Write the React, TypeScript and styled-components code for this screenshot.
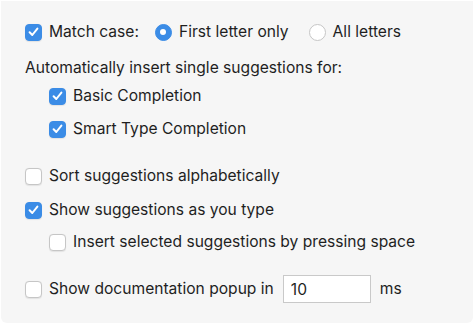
import React, { useState } from "react";
import styled, { createGlobalStyle } from "styled-components";

const GlobalStyle = createGlobalStyle`
  html, body {
    margin: 0;
    padding: 0;
    background: #ffffff;
  }
  body {
    font-family: Inter, "Open Sans", "Liberation Sans", sans-serif;
  }
`;

const Panel = styled.div`
  box-sizing: border-box;
  width: 472px;
  height: 322px;
  margin: 1px 1px 0 1px;
  background: #f6f6f6;
  border-radius: 0 0 6px 6px;
  padding: 21px 24px 0 24px;
  color: #1f1f1f;
  font-size: 15.6px;
  display: flex;
  flex-direction: column;
`;

const Row = styled.div<{ $indent?: boolean; $gap?: number }>`
  display: flex;
  align-items: center;
  height: 20px;
  padding-left: ${(p) => (p.$indent ? 24 : 0)}px;
  margin-top: ${(p) => p.$gap ?? 0}px;
`;

const Option = styled.label<{ $space?: number }>`
  display: flex;
  align-items: center;
  gap: 7px;
  margin-right: ${(p) => p.$space ?? 0}px;
  cursor: default;
  white-space: nowrap;
`;

const Box = styled.span<{ $on: boolean }>`
  box-sizing: border-box;
  width: 17px;
  height: 17px;
  border-radius: 4px;
  flex: none;
  display: flex;
  align-items: center;
  justify-content: center;
  background: ${(p) => (p.$on ? "#3b8ce6" : "#ffffff")};
  border: 1px solid ${(p) => (p.$on ? "#3b8ce6" : "#c6c6c6")};
  box-shadow: 0 0.5px 1px rgba(0, 0, 0, 0.08);
`;

const Radio = styled.span<{ $on: boolean }>`
  box-sizing: border-box;
  width: 17px;
  height: 17px;
  border-radius: 50%;
  flex: none;
  display: flex;
  align-items: center;
  justify-content: center;
  background: ${(p) => (p.$on ? "#3b8ce6" : "#ffffff")};
  border: 1px solid ${(p) => (p.$on ? "#3b8ce6" : "#c6c6c6")};
  &::after {
    content: "";
    display: ${(p) => (p.$on ? "block" : "none")};
    width: 6px;
    height: 6px;
    border-radius: 50%;
    background: #ffffff;
  }
`;

const Label = styled.span`
  line-height: 20px;
`;

const Heading = styled.div`
  margin-top: 16px;
  line-height: 20px;
`;

const NumberInput = styled.input`
  box-sizing: border-box;
  width: 88px;
  height: 28px;
  margin: 0 9px 0 9px;
  padding: 0 7px;
  border: 1px solid #c9c9c9;
  background: #ffffff;
  font: inherit;
  font-size: 15.6px;
  color: #1f1f1f;
  outline: none;
`;

const Tick = () => (
  <svg width="11" height="10" viewBox="0 0 11 10">
    <path
      d="M1.6 5.3 L4.3 8 L9.4 1.6"
      fill="none"
      stroke="#ffffff"
      strokeWidth="2"
      strokeLinecap="round"
      strokeLinejoin="round"
    />
  </svg>
);

const Check = ({
  on,
  onToggle,
  children,
  space,
}: {
  on: boolean;
  onToggle: () => void;
  children: React.ReactNode;
  space?: number;
}) => (
  <Option $space={space} onClick={onToggle}>
    <Box $on={on}>{on && <Tick />}</Box>
    <Label>{children}</Label>
  </Option>
);

const App = () => {
  const [state, setState] = useState({
    matchCase: true,
    basic: true,
    smart: true,
    sort: false,
    show: true,
    space: false,
    docs: false,
  });
  const [mode, setMode] = useState("first");
  const [delay, setDelay] = useState("10");

  const toggle = (key: keyof typeof state) => () =>
    setState((s) => ({ ...s, [key]: !s[key] }));

  return (
    <>
      <GlobalStyle />
      <Panel>
        <Row>
          <Check on={state.matchCase} onToggle={toggle("matchCase")} space={16}>
            Match case:
          </Check>
          <Option $space={20} onClick={() => setMode("first")}>
            <Radio $on={mode === "first"} />
            <Label>First letter only</Label>
          </Option>
          <Option onClick={() => setMode("all")}>
            <Radio $on={mode === "all"} />
            <Label>All letters</Label>
          </Option>
        </Row>
        <Heading>Automatically insert single suggestions for:</Heading>
        <Row $indent $gap={8}>
          <Check on={state.basic} onToggle={toggle("basic")}>
            Basic Completion
          </Check>
        </Row>
        <Row $indent $gap={13}>
          <Check on={state.smart} onToggle={toggle("smart")}>
            Smart Type Completion
          </Check>
        </Row>
        <Row $gap={27}>
          <Check on={state.sort} onToggle={toggle("sort")}>
            Sort suggestions alphabetically
          </Check>
        </Row>
        <Row $gap={14}>
          <Check on={state.show} onToggle={toggle("show")}>
            Show suggestions as you type
          </Check>
        </Row>
        <Row $indent $gap={12}>
          <Check on={state.space} onToggle={toggle("space")}>
            Insert selected suggestions by pressing space
          </Check>
        </Row>
        <Row $gap={27}>
          <Check on={state.docs} onToggle={toggle("docs")}>
            Show documentation popup in
          </Check>
          <NumberInput value={delay} onChange={(e) => setDelay(e.target.value)} />
          <Label>ms</Label>
        </Row>
      </Panel>
    </>
  );
};

export default App;
